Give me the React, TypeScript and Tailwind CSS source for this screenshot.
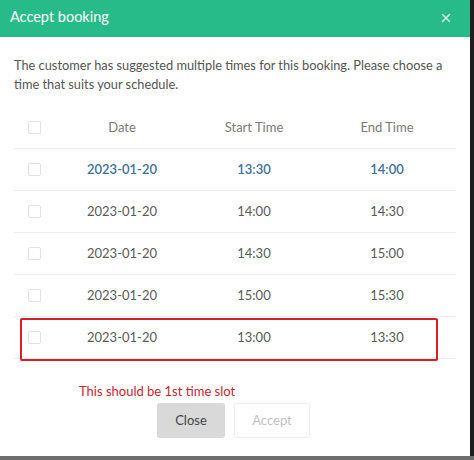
import React from "react";
import { X } from "lucide-react";

interface Slot {
  date: string;
  start: string;
  end: string;
  active?: boolean;
  flagged?: boolean;
}

const SLOTS: Slot[] = [
  { date: "2023-01-20", start: "13:30", end: "14:00", active: true },
  { date: "2023-01-20", start: "14:00", end: "14:30" },
  { date: "2023-01-20", start: "14:30", end: "15:00" },
  { date: "2023-01-20", start: "15:00", end: "15:30" },
  { date: "2023-01-20", start: "13:00", end: "13:30", flagged: true },
];

const Box = () => (
  <span className="block w-[13px] h-[13px] border border-[#e2e2e2] rounded-[2px] bg-white" />
);

const SlotRow: React.FC<{ slot: Slot }> = ({ slot }) => {
  const tone = slot.active ? "text-[#3d6f9c] font-semibold" : "text-[#5a5a5a]";
  return (
    <div className="relative grid grid-cols-[42px_132px_132px_1fr] items-center h-[42px] border-b border-[#efefef]">
      <div className="pl-[14px]">
        <Box />
      </div>
      <div className={`text-center ${tone}`}>{slot.date}</div>
      <div className={`text-center ${tone}`}>{slot.start}</div>
      <div className={`text-center pr-[2px] ${tone}`}>{slot.end}</div>
      {slot.flagged && (
        <div className="absolute left-[6px] top-[1px] w-[418px] h-[43px] border-2 border-[#d3202a] rounded-[2px]" />
      )}
    </div>
  );
};

export default function App() {
  return (
    <div className="w-[474px] h-[460px] flex flex-col bg-[#6e6e6e]" style={{ fontFamily: "Lato, 'Open Sans', sans-serif" }}>
      <div className="flex h-[456px]">
        <div className="w-[470px] h-full bg-white flex flex-col">
          <div className="h-[37px] bg-[#27bb8a] flex items-center justify-between pl-[10px] pr-[17px] pb-[3px]">
            <span className="text-white text-[14.5px]">Accept booking</span>
            <X size={14} strokeWidth={2.5} className="text-[#d9f7ec] mt-[1px]" />
          </div>

          <p className="px-[14px] mt-[19px] text-[12.8px] leading-[19px] text-[#555]">
            The customer has suggested multiple times for this booking. Please choose a time that suits your schedule.
          </p>

          <div className="mx-[14px] mt-[13px] text-[13px]">
            <div className="grid grid-cols-[42px_132px_132px_1fr] items-center h-[42px] border-b border-[#efefef] text-[#7a7a7a]">
              <div className="pl-[14px]">
                <Box />
              </div>
              <div className="text-center">Date</div>
              <div className="text-center">Start Time</div>
              <div className="text-center pr-[2px]">End Time</div>
            </div>
            {SLOTS.map((s, i) => (
              <SlotRow key={i} slot={s} />
            ))}
          </div>

          <div className="pl-[79px] mt-[23px] text-[13px] leading-[18px] text-[#c8262f]">
            This should be 1st time slot
          </div>

          <div className="flex justify-center gap-[9px] mt-[3px] pr-[3px]">
            <button className="w-[68px] h-[35px] rounded-[3px] bg-[#d9d9d9] text-[13px] text-[#444]">Close</button>
            <button className="w-[76px] h-[35px] rounded-[3px] border border-[#eeeeee] bg-white text-[13px] text-[#c2c2c2]">
              Accept
            </button>
          </div>
        </div>
        <div className="w-[4px] h-full bg-[#1e1e1e]" />
      </div>
      <div className="h-[4px] bg-[#6e6e6e]" />
    </div>
  );
}
